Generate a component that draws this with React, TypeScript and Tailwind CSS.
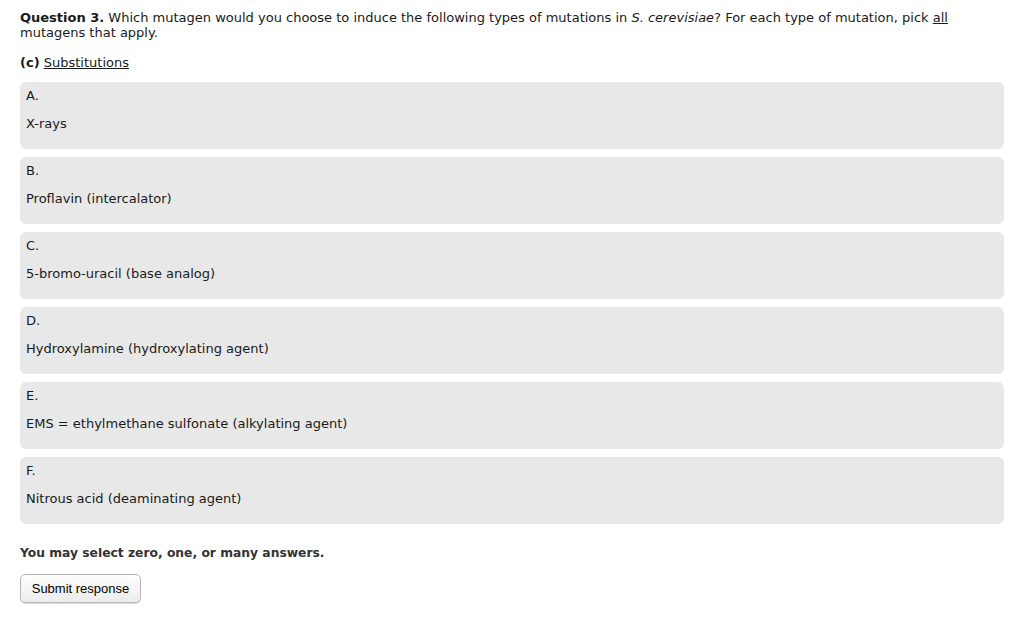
import React from "react";

const options = [
  { l: "A.", t: "X-rays" },
  { l: "B.", t: "Proflavin (intercalator)" },
  { l: "C.", t: "5-bromo-uracil (base analog)" },
  { l: "D.", t: "Hydroxylamine (hydroxylating agent)" },
  { l: "E.", t: "EMS = ethylmethane sulfonate (alkylating agent)" },
  { l: "F.", t: "Nitrous acid (deaminating agent)" },
];

export default function App() {
  return (
    <div
      className="w-[1024px] h-[619px] bg-white text-[#1a1a1a] overflow-hidden"
      style={{ fontFamily: '"DejaVu Sans", Verdana, sans-serif' }}
    >
      <div className="pl-[20px] pr-[20px] pt-[10px]">
        <p className="text-[13px] leading-[15px]">
          <b>Question 3.</b> Which mutagen would you choose to induce the following types of mutations in{" "}
          <i>S. cerevisiae</i>? For each type of mutation, pick <u>all</u> mutagens that apply.
        </p>
        <p className="mt-[15px] text-[13px] leading-[15px]">
          <b>(c)</b> <u>Substitutions</u>
        </p>
        <div className="mt-[12px] flex flex-col gap-[8px]">
          {options.map((o) => (
            <div key={o.l} className="h-[67px] rounded-[6px] bg-[#e8e8e8] px-[6px] pt-[6px] text-[13px] leading-[15px]">
              <div>{o.l}</div>
              <div className="mt-[13px]">{o.t}</div>
            </div>
          ))}
        </div>
        <p className="mt-[22px] text-[12.3px] font-bold text-[#333] leading-[15px]">
          You may select zero, one, or many answers.
        </p>
        <button
          className="mt-[13px] h-[29px] w-[121px] rounded-[5px] border border-[#b8b8b8] text-[13px] text-black shadow-[0_1px_1px_rgba(0,0,0,0.15)]"
          style={{ background: "linear-gradient(#fdfdfd, #ececec)", fontFamily: '"Liberation Sans", Arial, sans-serif' }}
        >
          Submit response
        </button>
      </div>
    </div>
  );
}
